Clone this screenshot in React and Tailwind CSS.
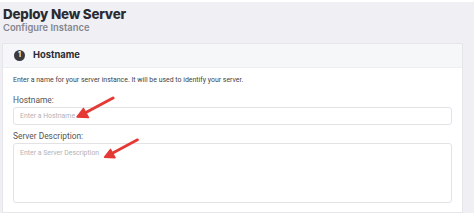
const Arrow = ({ className }) => (
  <svg className={className} viewBox="0 0 40 24" fill="none">
    <path d="M38 2 L9 17.5" stroke="#e53935" strokeWidth="3" strokeLinecap="round" />
    <path d="M2 21 L13.5 21.5 L8.5 12.5 Z" fill="#e53935" stroke="#e53935" strokeWidth="1.5" strokeLinejoin="round" />
  </svg>
);

export default function App() {
  return (
    <div className="w-[474px] h-[213px] overflow-hidden bg-white" style={{ fontFamily: 'Roboto, sans-serif' }}>
      <div className="mt-[2px] h-[211px] bg-[#f0f0f4] flex flex-col">
        <div className="pl-[3px] pt-[4px] h-[41px]" style={{ fontFamily: 'Inter, sans-serif' }}>
          <h1 className="text-[13.4px] leading-[16px] font-extrabold text-[#2b2b33] tracking-[-0.2px]">Deploy New Server</h1>
          <p className="text-[9.4px] leading-[11px] font-semibold text-[#85858d]">Configure Instance</p>
        </div>
        <div className="ml-[2px] w-[461px] flex-1 bg-white border border-[#e6e6ea] flex flex-col">
          <div className="h-[24px] bg-[#f5f7f9] flex items-center pl-[11px] gap-[8px] border-b border-[#eceef0]" style={{ fontFamily: 'Inter, sans-serif' }}>
            <span className="w-[11px] h-[11px] rounded-full bg-[#3a3a3f] text-white text-[7px] font-bold flex items-center justify-center">1</span>
            <span className="text-[9.4px] font-bold text-[#2b2b33]">Hostname</span>
          </div>
          <div className="px-[10px] pt-[7px] flex flex-col relative">
            <p className="text-[6.95px] leading-[10px] text-[#3f3f44]">Enter a name for your server instance. It will be used to identify your server.</p>
            <label className="mt-[10px] text-[8.4px] leading-[10px] text-[#555]">Hostname:</label>
            <div className="mt-[2px] h-[18px] border border-[#e3e3e6] rounded-[3px] flex items-center pl-[6px] text-[6.9px] text-[#b3b3b8]">Enter a Hostname</div>
            <label className="mt-[6px] text-[8.4px] leading-[10px] text-[#555]">Server Description:</label>
            <div className="mt-[2px] h-[60px] border border-[#e3e3e6] rounded-[3px] pl-[6px] pt-[4px] text-[6.9px] text-[#b3b3b8]">Enter a Server Description</div>
            <Arrow className="absolute left-[72px] top-[28px] w-[40px] h-[24px]" />
            <Arrow className="absolute left-[97px] top-[70px] w-[42px] h-[22px]" />
          </div>
        </div>
      </div>
    </div>
  );
}
